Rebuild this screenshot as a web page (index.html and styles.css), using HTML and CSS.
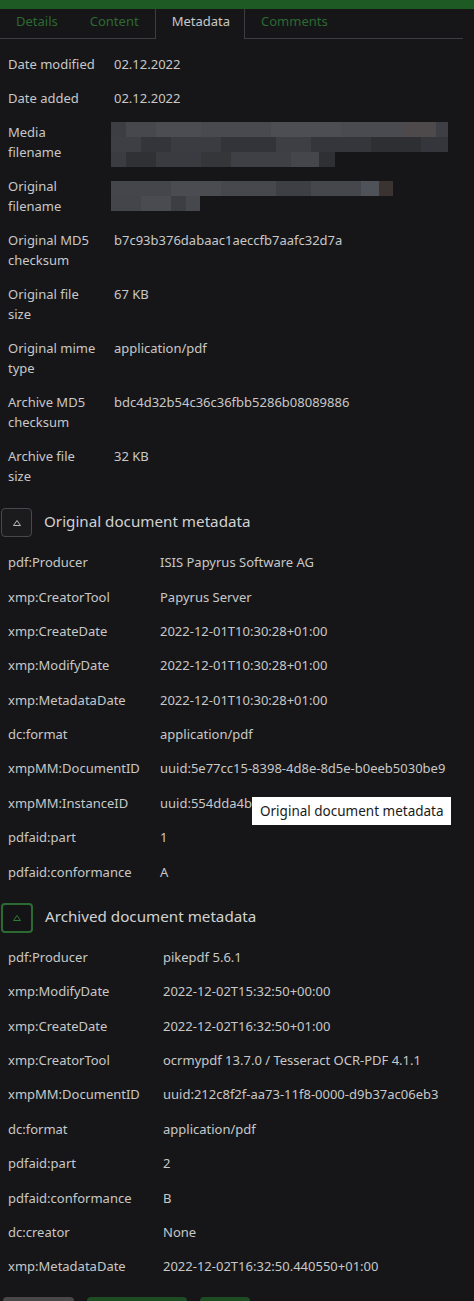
FILE: index.html
```html
<!DOCTYPE html>
<html lang="en">
<head>
<meta charset="utf-8">
<title>Metadata</title>
<link rel="stylesheet" href="styles.css">
</head>
<body>
<div class="topbar"></div>
<ul class="tabs">
  <li class="tab">Details</li>
  <li class="tab">Content</li>
  <li class="tab active">Metadata</li>
  <li class="tab">Comments</li>
</ul>

<div class="props">
  <div class="prop"><div class="k">Date modified</div><div class="v">02.12.2022</div></div>
  <div class="prop"><div class="k">Date added</div><div class="v">02.12.2022</div></div>
  <div class="prop"><div class="k">Media filename</div>
    <div class="v">
      <div class="blur blur-media">
        <div class="band b1"></div>
        <div class="band b2"></div>
        <div class="band b3"></div>
      </div>
    </div>
  </div>
  <div class="prop"><div class="k">Original filename</div>
    <div class="v">
      <div class="blur blur-orig">
        <div class="band b4"></div>
        <div class="band b5"></div>
      </div>
    </div>
  </div>
  <div class="prop"><div class="k">Original MD5 checksum</div><div class="v">b7c93b376dabaac1aeccfb7aafc32d7a</div></div>
  <div class="prop"><div class="k">Original file size</div><div class="v">67 KB</div></div>
  <div class="prop"><div class="k">Original mime type</div><div class="v">application/pdf</div></div>
  <div class="prop"><div class="k">Archive MD5 checksum</div><div class="v">bdc4d32b54c36c36fbb5286b08089886</div></div>
  <div class="prop"><div class="k">Archive file size</div><div class="v">32 KB</div></div>
</div>

<div class="section">
  <div class="sec-head">
    <button class="toggle"><svg width="10" height="8" viewBox="0 0 10 8"><path d="M5 1.5 L8.5 6.5 L1.5 6.5 Z" fill="none" stroke="#b8b8b8" stroke-width="1"/></svg></button>
    <span class="sec-title">Original document metadata</span>
  </div>
  <div class="meta meta-orig">
    <div class="mrow"><div class="k">pdf:Producer</div><div class="v">ISIS Papyrus Software AG</div></div>
    <div class="mrow"><div class="k">xmp:CreatorTool</div><div class="v">Papyrus Server</div></div>
    <div class="mrow"><div class="k">xmp:CreateDate</div><div class="v">2022-12-01T10:30:28+01:00</div></div>
    <div class="mrow"><div class="k">xmp:ModifyDate</div><div class="v">2022-12-01T10:30:28+01:00</div></div>
    <div class="mrow"><div class="k">xmp:MetadataDate</div><div class="v">2022-12-01T10:30:28+01:00</div></div>
    <div class="mrow"><div class="k">dc:format</div><div class="v">application/pdf</div></div>
    <div class="mrow"><div class="k">xmpMM:DocumentID</div><div class="v">uuid:5e77cc15-8398-4d8e-8d5e-b0eeb5030be9</div></div>
    <div class="mrow has-tip"><div class="k">xmpMM:InstanceID</div><div class="v">uuid:554dda4b</div>
      <div class="tooltip">Original document metadata</div>
    </div>
    <div class="mrow"><div class="k">pdfaid:part</div><div class="v">1</div></div>
    <div class="mrow"><div class="k">pdfaid:conformance</div><div class="v">A</div></div>
  </div>
</div>

<div class="section section-arch">
  <div class="sec-head">
    <button class="toggle focused"><svg width="10" height="8" viewBox="0 0 10 8"><path d="M5 1.5 L8.5 6.5 L1.5 6.5 Z" fill="none" stroke="#2f7a38" stroke-width="1"/></svg></button>
    <span class="sec-title">Archived document metadata</span>
  </div>
  <div class="meta meta-arch">
    <div class="mrow"><div class="k">pdf:Producer</div><div class="v">pikepdf 5.6.1</div></div>
    <div class="mrow"><div class="k">xmp:ModifyDate</div><div class="v">2022-12-02T15:32:50+00:00</div></div>
    <div class="mrow"><div class="k">xmp:CreateDate</div><div class="v">2022-12-02T16:32:50+01:00</div></div>
    <div class="mrow"><div class="k">xmp:CreatorTool</div><div class="v">ocrmypdf 13.7.0 / Tesseract OCR-PDF 4.1.1</div></div>
    <div class="mrow"><div class="k">xmpMM:DocumentID</div><div class="v">uuid:212c8f2f-aa73-11f8-0000-d9b37ac06eb3</div></div>
    <div class="mrow"><div class="k">dc:format</div><div class="v">application/pdf</div></div>
    <div class="mrow"><div class="k">pdfaid:part</div><div class="v">2</div></div>
    <div class="mrow"><div class="k">pdfaid:conformance</div><div class="v">B</div></div>
    <div class="mrow"><div class="k">dc:creator</div><div class="v">None</div></div>
    <div class="mrow"><div class="k">xmp:MetadataDate</div><div class="v">2022-12-02T16:32:50.440550+01:00</div></div>
  </div>
</div>

<div class="actions">
  <div class="btn btn-grey"></div>
  <div class="btn btn-green btn-wide"></div>
  <div class="btn btn-green btn-small"></div>
</div>
</body>
</html>
```

FILE: styles.css
```css
html, body {
  margin: 0;
  padding: 0;
  background: #161618;
}
body {
  font-family: "Noto Sans", "Open Sans", sans-serif;
  font-size: 13px;
  line-height: 20px;
  color: #c8c8c8;
  overflow: hidden;
  height: 1301px;
}
.topbar {
  height: 9px;
  background: #1d5a24;
}
.tabs {
  list-style: none;
  margin: 0;
  padding: 0;
  display: flex;
  width: 463px;
  border-bottom: 1px solid #3e3e42;
}
.tab {
  padding: 2px 16px 7px 16px;
  color: #2b6a30;
}
.tab.active {
  color: #c8c8c8;
  border-left: 1px solid #3e3e42;
  border-right: 1px solid #3e3e42;
  background: #161618;
  margin-bottom: -1px;
  padding: 2px 14px 8px 16px;
}
.props {
  padding-top: 8px;
}
.prop {
  display: grid;
  grid-template-columns: 90px 1fr;
  column-gap: 16px;
  padding: 7px 8px;
}
.v {
  white-space: nowrap;
}
.blur {
  margin-left: -3px;
}
.blur-media {
  height: 40px;
}
.blur-orig {
  margin-top: 5px;
}
.band {
  height: 15px;
}
.b1 {
  width: 337px;
  background: linear-gradient(90deg, #3d3e44 0 15px, #47484e 15px 45px, #4c4d53 45px 90px, #494a50 90px 160px, #4d4e54 160px 230px, #4a4b51 230px 290px, #4e4a4c 290px 325px, #3e3f44 325px 337px);
}
.b2 {
  width: 337px;
  background: linear-gradient(90deg, #3e3f45 0 30px, #34353a 30px 60px, #3b3c41 60px 110px, #333439 110px 165px, #3e3f44 165px 200px, #35363b 200px 260px, #2e2f33 260px 310px, #35363b 310px 337px);
}
.b3 {
  width: 224px;
  background: linear-gradient(90deg, #3b3c41 0 15px, #303135 15px 45px, #3a3b40 45px 90px, #35363a 90px 120px, #3f4045 120px 180px, #45464b 180px 208px, #2f3034 208px 224px);
}
.b4 {
  width: 282px;
  background: linear-gradient(90deg, #45464c 0 60px, #4b4c52 60px 110px, #47484e 110px 165px, #3e3f44 165px 200px, #46474d 200px 250px, #50525a 250px 268px, #3a3332 268px 282px);
}
.b5 {
  width: 89px;
  background: linear-gradient(90deg, #44454b 0 30px, #4a4b51 30px 60px, #3d3e44 60px 75px, #47484e 75px 89px);
}
.section {
  margin-top: 15px;
}
.section-arch {
  margin-top: 14px;
}
.sec-head {
  display: flex;
  align-items: center;
  gap: 12px;
  padding-left: 1px;
}
.toggle {
  width: 31px;
  height: 29px;
  box-sizing: border-box;
  border: 1px solid #48484c;
  border-radius: 4px;
  background: #1b1b1e;
  padding: 0;
  display: flex;
  align-items: center;
  justify-content: center;
}
.toggle.focused {
  border: 2px solid #2c6a33;
  width: 32px;
  height: 30px;
  background: #141416;
}
.sec-title {
  font-size: 15.2px;
  line-height: 20px;
  color: #d2d2d2;
  margin-top: -3px;
}
.meta {
  padding-top: 8px;
}
.meta-arch {
  padding-top: 7px;
}
.mrow {
  display: grid;
  column-gap: 20px;
  padding: 7.2px 8px;
}
.meta-orig .mrow {
  grid-template-columns: 132px 1fr;
}
.meta-arch .mrow {
  grid-template-columns: 135px 1fr;
}
.has-tip {
  position: relative;
}
.tooltip {
  position: absolute;
  left: 252px;
  top: 11px;
  width: 199px;
  height: 28px;
  box-sizing: border-box;
  padding: 4px 8px;
  background: #ffffff;
  color: #1a1a1a;
  font-size: 13.5px;
  line-height: 20px;
  white-space: nowrap;
}
.actions {
  display: flex;
  gap: 13px;
  padding-left: 3px;
  margin-top: 13px;
}
.btn {
  height: 30px;
  border-radius: 4px 4px 0 0;
}
.btn-grey {
  width: 71px;
  background: #48484b;
}
.btn-green {
  background: #1e4d24;
}
.btn-wide {
  width: 100px;
}
.btn-small {
  width: 50px;
}
```
